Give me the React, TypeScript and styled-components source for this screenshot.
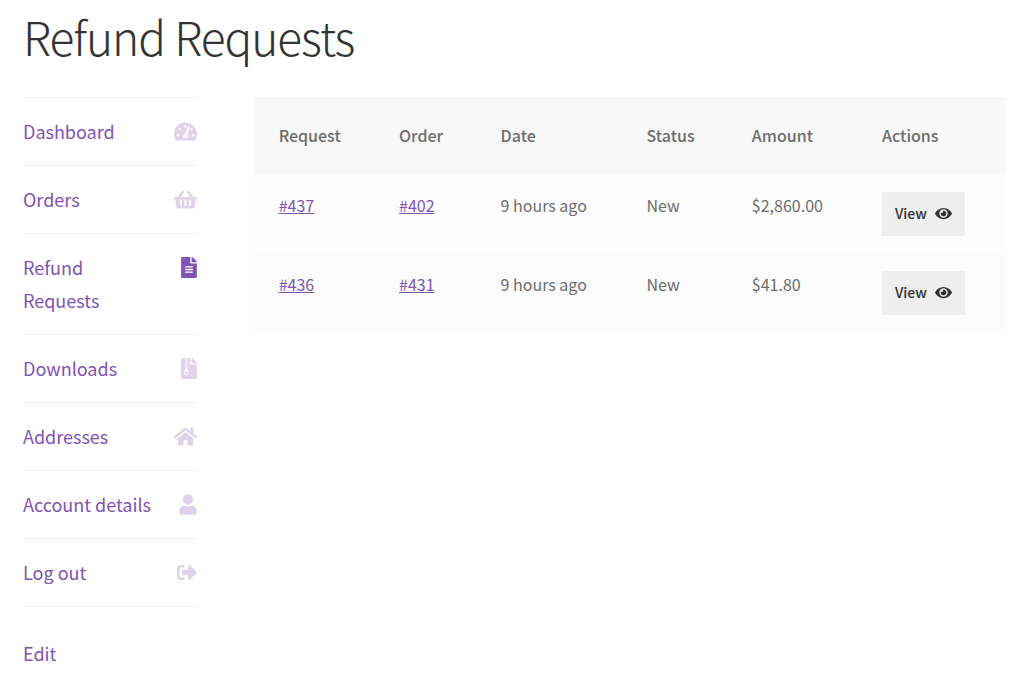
import React from "react";
import styled, { createGlobalStyle } from "styled-components";
import type { IconType } from "react-icons";
import {
  FaEye,
  FaFileAlt,
  FaFileArchive,
  FaHome,
  FaShoppingBasket,
  FaSignOutAlt,
  FaTachometerAlt,
  FaUser,
} from "react-icons/fa";

const GlobalStyle = createGlobalStyle`
  *, *::before, *::after { box-sizing: border-box; }
  body {
    margin: 0;
    background: #fff;
    color: #6d6d6d;
    font-family: "Source Sans Pro", "Noto Sans CJK SC", "Open Sans", sans-serif;
    font-size: 16px;
    line-height: 26px;
  }
`;

const Page = styled.div`
  padding: 4px 26px 0 23px;
`;

const Title = styled.h1`
  margin: 0 0 29px;
  color: #333;
  font-size: 46px;
  font-weight: 300;
  line-height: 64px;
  letter-spacing: -1px;
`;

const Columns = styled.div`
  display: grid;
  grid-template-columns: minmax(0, 3fr) minmax(0, 13fr);
  gap: 57px;
  align-items: start;
`;

const Sidebar = styled.aside`
  font-size: 18px;
  line-height: 33px;
`;

const NavList = styled.ul`
  margin: 0;
  padding: 0;
  list-style: none;
  border-top: 1px solid #f0f0f0;
`;

const NavItem = styled.li`
  border-bottom: 1px solid #f0f0f0;
`;

const NavLink = styled.a<{ $active: boolean; $iconWidth: number }>`
  display: flex;
  justify-content: space-between;
  gap: 22px;
  padding: 17px 0;
  color: #7f54b3;
  text-decoration: none;

  svg {
    flex: none;
    width: ${(p) => p.$iconWidth}px;
    height: 21px;
    margin-top: 6px;
    opacity: ${(p) => (p.$active ? 1 : 0.25)};
  }
`;

const EditLink = styled.a`
  display: inline-block;
  margin-top: 30px;
  color: #7f54b3;
  text-decoration: none;
`;

const Table = styled.table`
  width: 100%;
  table-layout: fixed;
  border-collapse: collapse;
  text-align: left;
`;

const HeadCell = styled.th<{ $width: string }>`
  width: ${(p) => p.$width};
  padding: 25px 0 27px 25px;
  background: #f8f8f8;
  font-weight: 500;
`;

const Row = styled.tr`
  background: #fdfdfd;

  &:nth-child(even) {
    background: #fbfbfb;
  }
`;

const Cell = styled.td`
  padding: 17px 0 18px 25px;
  vertical-align: top;
`;

const NumberLink = styled.a`
  color: #7f54b3;
  text-decoration: underline;
`;

const ViewButton = styled.button`
  display: flex;
  align-items: center;
  gap: 8px;
  height: 44px;
  padding: 0 13px 2px;
  border: 0;
  background: #eee;
  color: #333;
  font-family: inherit;
  font-size: 14px;
  font-weight: 500;
  cursor: pointer;

  svg {
    width: 17px;
    height: 15px;
  }
`;

const links: { label: string; icon: IconType; iconWidth: number; active?: boolean }[] = [
  { label: "Dashboard", icon: FaTachometerAlt, iconWidth: 23 },
  { label: "Orders", icon: FaShoppingBasket, iconWidth: 23 },
  { label: "Refund Requests", icon: FaFileAlt, iconWidth: 16, active: true },
  { label: "Downloads", icon: FaFileArchive, iconWidth: 16 },
  { label: "Addresses", icon: FaHome, iconWidth: 23 },
  { label: "Account details", icon: FaUser, iconWidth: 18 },
  { label: "Log out", icon: FaSignOutAlt, iconWidth: 20 },
];

const columns = [
  { label: "Request", width: "16%" },
  { label: "Order", width: "13.5%" },
  { label: "Date", width: "19.4%" },
  { label: "Status", width: "14%" },
  { label: "Amount", width: "17.3%" },
  { label: "Actions", width: "19.8%" },
];

const requests = [
  { id: "#437", order: "#402", date: "9 hours ago", status: "New", amount: "$2,860.00" },
  { id: "#436", order: "#431", date: "9 hours ago", status: "New", amount: "$41.80" },
];

export default function App() {
  return (
    <>
      <GlobalStyle />
      <Page>
        <Title>Refund Requests</Title>
        <Columns>
          <Sidebar>
            <nav aria-label="Account">
              <NavList>
                {links.map(({ label, icon: Icon, iconWidth, active = false }) => (
                  <NavItem key={label}>
                    <NavLink
                      href="#"
                      $active={active}
                      $iconWidth={iconWidth}
                      aria-current={active ? "page" : undefined}
                    >
                      <span>{label}</span>
                      <Icon aria-hidden="true" />
                    </NavLink>
                  </NavItem>
                ))}
              </NavList>
            </nav>
            <EditLink href="#">Edit</EditLink>
          </Sidebar>
          <main>
            <Table>
              <thead>
                <tr>
                  {columns.map((c) => (
                    <HeadCell key={c.label} scope="col" $width={c.width}>
                      {c.label}
                    </HeadCell>
                  ))}
                </tr>
              </thead>
              <tbody>
                {requests.map((r) => (
                  <Row key={r.id}>
                    <Cell>
                      <NumberLink href="#">{r.id}</NumberLink>
                    </Cell>
                    <Cell>
                      <NumberLink href="#">{r.order}</NumberLink>
                    </Cell>
                    <Cell>{r.date}</Cell>
                    <Cell>{r.status}</Cell>
                    <Cell>{r.amount}</Cell>
                    <Cell>
                      <ViewButton type="button">
                        View
                        <FaEye aria-hidden="true" />
                      </ViewButton>
                    </Cell>
                  </Row>
                ))}
              </tbody>
            </Table>
          </main>
        </Columns>
      </Page>
    </>
  );
}
